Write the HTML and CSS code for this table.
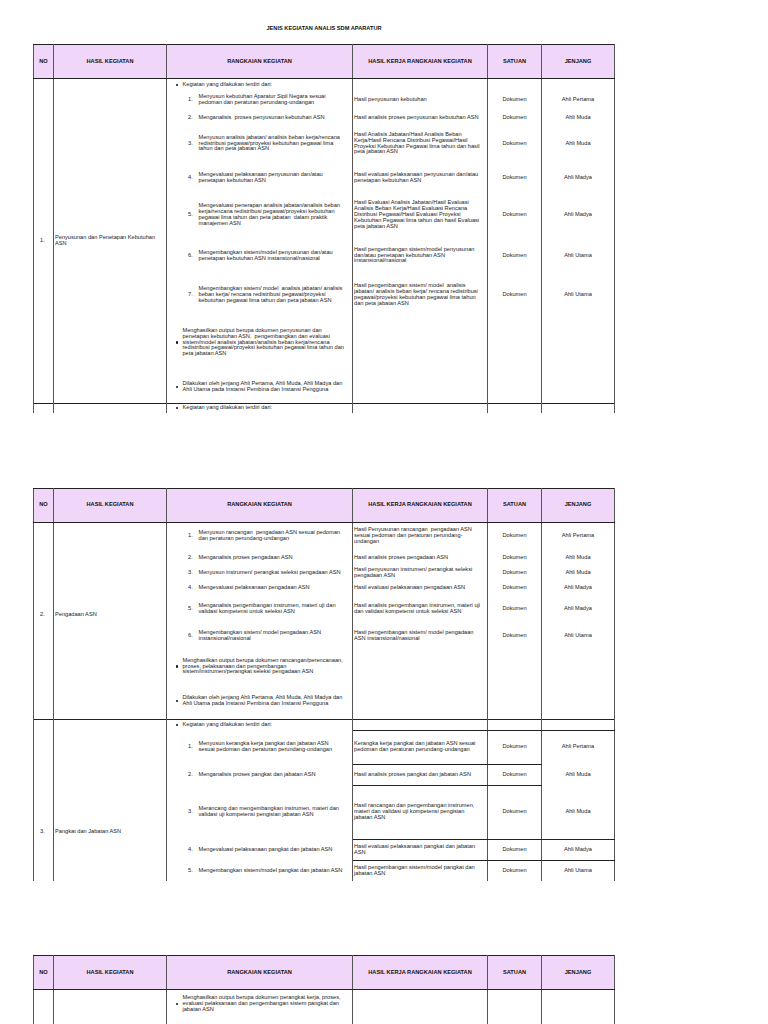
FILE: index.html
```html
<!DOCTYPE html>
<html lang="id">
<head>
<meta charset="utf-8">
<title>Jenis Kegiatan Analis SDM Aparatur</title>
<link rel="stylesheet" href="styles.css">
</head>
<body>
<div class="doc">

<section class="page p1">
  <h1 class="title">JENIS KEGIATAN ANALIS SDM APARATUR</h1>
  <table class="grid">
    <colgroup><col class="c-no"><col class="c-hasil"><col class="c-rk"><col class="c-hk"><col class="c-sat"><col class="c-jen"></colgroup>
    <thead>
      <tr class="head"><th>NO</th><th>HASIL KEGIATAN</th><th>RANGKAIAN KEGIATAN</th><th>HASIL KERJA RANGKAIAN KEGIATAN</th><th>SATUAN</th><th>JENJANG</th></tr>
    </thead>
    <tbody class="sec">
      <tr class="h13">
        <td rowspan="10" class="no">1.</td>
        <td rowspan="10" class="name">Penyusunan dan Penetapan Kebutuhan<br>ASN</td>
        <td class="rk"><div class="bul"><i class="dot"></i><span>Kegiatan yang dilakukan terdiri dari:</span></div></td>
        <td></td><td></td><td></td>
      </tr>
      <tr class="h17">
        <td class="rk"><div class="num"><span class="n">1.</span><span>Menyusun kebutuhan Aparatur Sipil Negara sesuai<br>pedoman dan peraturan perundang-undangan</span></div></td>
        <td class="hk">Hasil penyusunan kebutuhan</td><td class="ctr">Dokumen</td><td class="ctr">Ahli Pertama</td>
      </tr>
      <tr class="h19">
        <td class="rk"><div class="num"><span class="n">2.</span><span>Menganalisis&nbsp; proses penyusunan kebutuhan ASN</span></div></td>
        <td class="hk">Hasil analisis proses penyusunan kebutuhan ASN</td><td class="ctr">Dokumen</td><td class="ctr">Ahli Muda</td>
      </tr>
      <tr class="h32">
        <td class="rk"><div class="num"><span class="n">3.</span><span>Menyusun analisis jabatan/ analisis beban kerja/rencana<br>redistribusi pegawai/proyeksi kebutuhan pegawai lima<br>tahun dan peta jabatan ASN</span></div></td>
        <td class="hk">Hasil Analisis Jabatan/Hasil Analisis Beban<br>Kerja/Hasil Rencana Distribusi Pegawai/Hasil<br>Proyeksi Kebutuhan Pegawai lima tahun dan hasil<br>peta jabatan ASN</td><td class="ctr">Dokumen</td><td class="ctr">Ahli Muda</td>
      </tr>
      <tr class="h36">
        <td class="rk"><div class="num"><span class="n">4.</span><span>Mengevaluasi pelaksanaan penyusunan dan/atau<br>penetapan kebutuhan ASN</span></div></td>
        <td class="hk">Hasil evaluasi pelaksanaan penyusunan dan/atau<br>penetapan kebutuhan ASN</td><td class="ctr">Dokumen</td><td class="ctr">Ahli Madya</td>
      </tr>
      <tr class="h39">
        <td class="rk"><div class="num"><span class="n">5.</span><span>Mengevaluasi penerapan analisis jabatan/analisis beban<br>kerja/rencana redistribusi pegawai/proyeksi kebutuhan<br>pegawai lima tahun dan peta jabatan&nbsp; dalam praktik<br>manajemen ASN</span></div></td>
        <td class="hk">Hasil Evaluasi Analisis Jabatan/Hasil Evaluasi<br>Analisis Beban Kerja/Hasil Evaluasi Rencana<br>Distribusi Pegawai/Hasil Evaluasi Proyeksi<br>Kebutuhan Pegawai lima tahun dan hasil Evaluasi<br>peta jabatan ASN</td><td class="ctr">Dokumen</td><td class="ctr">Ahli Madya</td>
      </tr>
      <tr class="h42">
        <td class="rk"><div class="num"><span class="n">6.</span><span>Mengembangkan sistem/model penyusunan dan/atau<br>penetapan kebutuhan ASN instansional/nasional</span></div></td>
        <td class="hk">Hasil pengembangan sistem/model penyusunan<br>dan/atau penetapan kebutuhan ASN<br>instansional/nasional</td><td class="ctr">Dokumen</td><td class="ctr">Ahli Utama</td>
      </tr>
      <tr class="h37">
        <td class="rk"><div class="num"><span class="n">7.</span><span>Mengembangkan sistem/ model&nbsp; analisis jabatan/ analisis<br>beban kerja/ rencana redistribusi pegawai/proyeksi<br>kebutuhan pegawai lima tahun dan peta jabatan ASN</span></div></td>
        <td class="hk">Hasil pengembangan sistem/ model&nbsp; analisis<br>jabatan/ analisis beban kerja/ rencana redistribusi<br>pegawai/proyeksi kebutuhan pegawai lima tahun<br>dan peta jabatan ASN</td><td class="ctr">Dokumen</td><td class="ctr">Ahli Utama</td>
      </tr>
      <tr class="h58">
        <td class="rk"><div class="bul"><i class="dot"></i><span>Menghasilkan output berupa dokumen penyusunan dan<br>penetapan kebutuhan ASN,&nbsp; pengembangkan dan evaluasi<br>sistem/model analisis jabatan/analisis beban kerja/rencana<br>redistribusi pegawai/proyeksi kebutuhan pegawai lima tahun dan<br>peta jabatan ASN</span></div></td>
        <td></td><td></td><td></td>
      </tr>
      <tr class="h32">
        <td class="rk"><div class="bul"><i class="dot"></i><span>Dilakukan oleh jenjang Ahli Pertama, Ahli Muda, Ahli Madya dan<br>Ahli Utama pada Instansi Pembina dan Instansi Pengguna</span></div></td>
        <td></td><td></td><td></td>
      </tr>
    </tbody>
    <tbody class="sec">
      <tr class="h9">
        <td class="no"></td><td class="name"></td>
        <td class="rk"><div class="bul"><i class="dot"></i><span>Kegiatan yang dilakukan terdiri dari:</span></div></td>
        <td></td><td></td><td></td>
      </tr>
    </tbody>
  </table>
</section>

<section class="page p2">
  <table class="grid">
    <colgroup><col class="c-no"><col class="c-hasil"><col class="c-rk"><col class="c-hk"><col class="c-sat"><col class="c-jen"></colgroup>
    <thead>
      <tr class="head"><th>NO</th><th>HASIL KEGIATAN</th><th>RANGKAIAN KEGIATAN</th><th>HASIL KERJA RANGKAIAN KEGIATAN</th><th>SATUAN</th><th>JENJANG</th></tr>
    </thead>
    <tbody class="sec">
      <tr class="h28">
        <td rowspan="8" class="no lift">2.</td>
        <td rowspan="8" class="name lift">Pengadaan ASN</td>
        <td class="rk"><div class="num"><span class="n">1.</span><span>Menyusun rancangan&nbsp; pengadaan ASN sesuai pedoman<br>dan peraturan perundang-undangan</span></div></td>
        <td class="hk">Hasil Penyusunan rancangan&nbsp; pengadaan ASN<br>sesuai pedoman dan peraturan perundang-<br>undangan</td><td class="ctr">Dokumen</td><td class="ctr">Ahli Pertama</td>
      </tr>
      <tr class="h15">
        <td class="rk"><div class="num"><span class="n">2.</span><span>Menganalisis proses pengadaan ASN</span></div></td>
        <td class="hk">Hasil analisis proses pengadaan ASN</td><td class="ctr">Dokumen</td><td class="ctr">Ahli Muda</td>
      </tr>
      <tr class="h15">
        <td class="rk"><div class="num"><span class="n">3.</span><span>Menyusun instrumen/ perangkat seleksi pengadaan ASN</span></div></td>
        <td class="hk">Hasil penyusunan instrumen/ perangkat seleksi<br>pengadaan ASN</td><td class="ctr">Dokumen</td><td class="ctr">Ahli Muda</td>
      </tr>
      <tr class="h15">
        <td class="rk"><div class="num"><span class="n">4.</span><span>Mengevaluasi pelaksanaan pengadaan ASN</span></div></td>
        <td class="hk">Hasil evaluasi pelaksanaan pengadaan ASN</td><td class="ctr">Dokumen</td><td class="ctr">Ahli Madya</td>
      </tr>
      <tr class="h27">
        <td class="rk"><div class="num"><span class="n">5.</span><span>Menganalisis pengembangan instrumen, materi uji dan<br>validasi kompetensi untuk seleksi ASN</span></div></td>
        <td class="hk">Hasil analisis pengembangan instrumen, materi uji<br>dan validasi kompetensi untuk seleksi ASN</td><td class="ctr">Dokumen</td><td class="ctr">Ahli Madya</td>
      </tr>
      <tr class="h27">
        <td class="rk"><div class="num"><span class="n">6.</span><span>Mengembangkan sistem/ model pengadaan ASN<br>instansional/nasional</span></div></td>
        <td class="hk">Hasil pengembangan sistem/ model pengadaan<br>ASN instansional/nasional</td><td class="ctr">Dokumen</td><td class="ctr">Ahli Utama</td>
      </tr>
      <tr class="h35">
        <td class="rk"><div class="bul"><i class="dot"></i><span>Menghasilkan output berupa dokumen rancangan/perencanaan,<br>proses, pelaksanaan dan pengembangan<br>sistem/instrumen/perangkat seleksi pengadaan ASN</span></div></td>
        <td></td><td></td><td></td>
      </tr>
      <tr class="h35">
        <td class="rk"><div class="bul"><i class="dot"></i><span>Dilakukan oleh jenjang Ahli Pertama, Ahli Muda, Ahli Madya dan<br>Ahli Utama pada Instansi Pembina dan Instansi Pengguna</span></div></td>
        <td></td><td></td><td></td>
      </tr>
    </tbody>
    <tbody class="sec">
      <tr class="h11">
        <td rowspan="6" class="no drop">3.</td>
        <td rowspan="6" class="name drop">Pangkat dan Jabatan ASN</td>
        <td class="rk"><div class="bul"><i class="dot"></i><span>Kegiatan yang dilakukan terdiri dari:</span></div></td>
        <td class="bb"></td><td class="bb"></td><td class="bb"></td>
      </tr>
      <tr class="h34">
        <td class="rk"><div class="num"><span class="n">1.</span><span>Menyusun kerangka kerja pangkat dan jabatan ASN<br>sesuai pedoman dan peraturan perundang-undangan</span></div></td>
        <td class="hk bb">Kerangka kerja pangkat dan jabatan ASN sesuai<br>pedoman dan peraturan perundang-undangan</td><td class="ctr bb">Dokumen</td><td class="ctr">Ahli Pertama</td>
      </tr>
      <tr class="h21">
        <td class="rk"><div class="num"><span class="n">2.</span><span>Menganalisis proses pangkat dan jabatan ASN</span></div></td>
        <td class="hk bb">Hasil analisis proses pangkat dan jabatan ASN</td><td class="ctr bb">Dokumen</td><td class="ctr">Ahli Muda</td>
      </tr>
      <tr class="h54">
        <td class="rk"><div class="num"><span class="n">3.</span><span>Merancang dan mengembangkan instrumen, materi dan<br>validasi uji kompetensi pengisian jabatan ASN</span></div></td>
        <td class="hk bb">Hasil rancangan dan pengembangan instrumen,<br>materi dan validasi uji kompetensi pengisian<br>jabatan ASN</td><td class="ctr bb">Dokumen</td><td class="ctr bb">Ahli Muda</td>
      </tr>
      <tr class="h21">
        <td class="rk"><div class="num"><span class="n">4.</span><span>Mengevaluasi pelaksanaan pangkat dan jabatan ASN</span></div></td>
        <td class="hk bb">Hasil evaluasi pelaksanaan pangkat dan jabatan<br>ASN</td><td class="ctr bb">Dokumen</td><td class="ctr bb">Ahli Madya</td>
      </tr>
      <tr class="h21">
        <td class="rk"><div class="num"><span class="n">5.</span><span>Mengembangkan sistem/model pangkat dan jabatan ASN</span></div></td>
        <td class="hk">Hasil pengembangan sistem/model pangkat dan<br>jabatan ASN</td><td class="ctr">Dokumen</td><td class="ctr">Ahli Utama</td>
      </tr>
    </tbody>
  </table>
</section>

<section class="page p3">
  <table class="grid">
    <colgroup><col class="c-no"><col class="c-hasil"><col class="c-rk"><col class="c-hk"><col class="c-sat"><col class="c-jen"></colgroup>
    <thead>
      <tr class="head"><th>NO</th><th>HASIL KEGIATAN</th><th>RANGKAIAN KEGIATAN</th><th>HASIL KERJA RANGKAIAN KEGIATAN</th><th>SATUAN</th><th>JENJANG</th></tr>
    </thead>
    <tbody class="sec">
      <tr class="h37">
        <td class="no"></td><td class="name"></td>
        <td class="rk top"><div class="bul"><i class="dot"></i><span>Menghasilkan output berupa dokumen perangkat kerja, proses,<br>evaluasi pelaksanaan dan pengembangan sistem pangkat dan<br>jabatan ASN</span></div></td>
        <td></td><td></td><td></td>
      </tr>
    </tbody>
  </table>
</section>

</div>
</body>
</html>
```

FILE: styles.css
```css
html, body {
  margin: 0;
  padding: 0;
  background: #ffffff;
}

body {
  font-family: "Liberation Sans", Arial, sans-serif;
  color: #222222;
  font-size: 5.65px;
  line-height: 5.9px;
}

.doc {
  padding-left: 33px;
}

.page {
  width: 582px;
}

.p1 { padding-top: 25px; }
.p2 { margin-top: 75px; }
.p3 { margin-top: 74px; }

.title {
  margin: 0 0 13px;
  font-size: 5.65px;
  line-height: 6px;
  font-weight: bold;
  text-align: center;
  color: #111;
}

.grid {
  border-collapse: collapse;
  table-layout: fixed;
  width: 581px;
}

.c-no { width: 20px; }
.c-hasil { width: 113px; }
.c-rk { width: 186px; }
.c-hk { width: 135px; }
.c-sat { width: 54px; }
.c-jen { width: 73px; }

.grid th,
.grid td {
  padding: 0;
  border-left: 1px solid #555555;
  border-right: 1px solid #555555;
  white-space: nowrap;
  overflow: hidden;
  vertical-align: middle;
}

.grid th {
  background: #f0d6f8;
  border-top: 1px solid #222222;
  border-bottom: 1px solid #222222;
  font-weight: bold;
  color: #111;
  text-align: center;
}

tr.head { height: 34px; }

tbody.sec { border-top: 1px solid #222222; }

.h9 { height: 9px; }
.h11 { height: 11px; }
.h13 { height: 13px; }
.h15 { height: 15px; }
.h17 { height: 17px; }
.h19 { height: 19px; }
.h21 { height: 21px; }
.h27 { height: 27px; }
.h28 { height: 28px; }
.h32 { height: 32px; }
.h34 { height: 34px; }
.h35 { height: 35px; }
.h36 { height: 36px; }
.h37 { height: 37px; }
.h39 { height: 39px; }
.h42 { height: 42px; }
.h54 { height: 54px; }
.h58 { height: 58px; }

.grid td.no {
  padding-left: 6px;
}

.grid td.name {
  padding-left: 1px;
}

.grid td.lift { padding-bottom: 12px; }
.grid td.drop { padding-top: 64px; }

.grid td.top {
  vertical-align: top;
  padding-top: 5px;
}

.bul {
  display: flex;
  align-items: center;
}

.dot {
  display: block;
  flex: none;
  width: 2.2px;
  height: 2.2px;
  border-radius: 50%;
  background: #111;
  margin-left: 8.5px;
  margin-right: 4.8px;
}

.num {
  display: flex;
  align-items: center;
}

.n {
  flex: none;
  width: 10.5px;
  padding-left: 21px;
}

.grid td.hk {
  padding-left: 1px;
}

.ctr {
  text-align: center;
}

.grid td.bb {
  border-bottom: 1px solid #222222;
}
```
